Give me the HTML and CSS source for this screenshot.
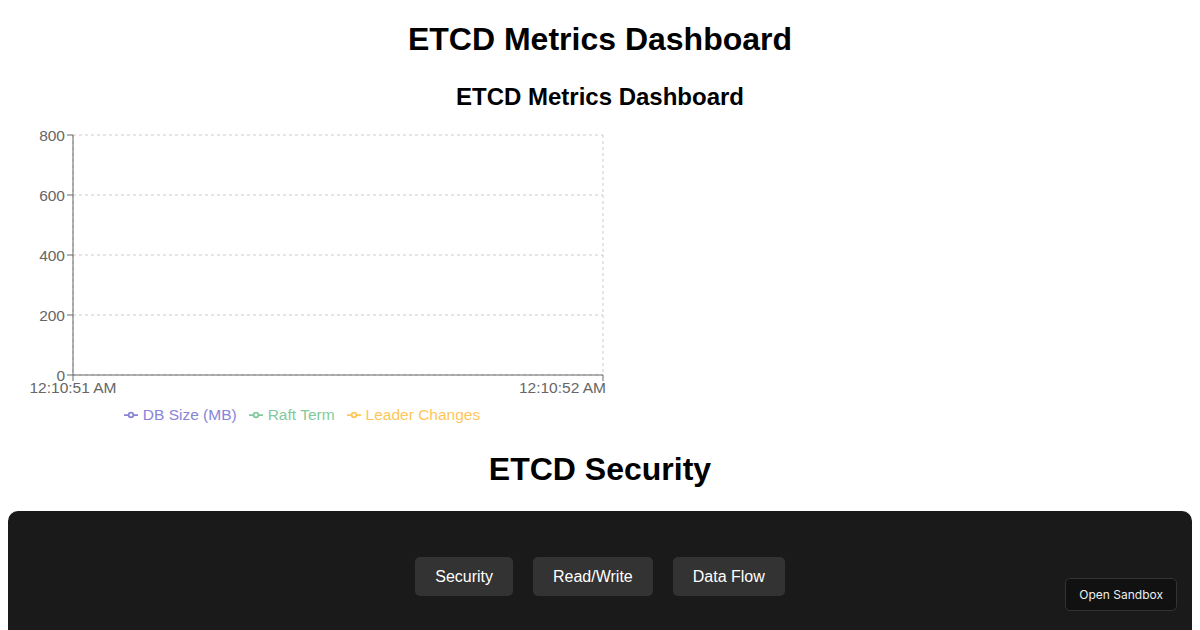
FILE: index.html
```html
<!DOCTYPE html>
<html lang="en">
<head>
	<meta charset="UTF-8">
	<title>ETCD Dashboard</title>
	<link rel="stylesheet" href="styles.css">
</head>
<body>
	<h1 class="title">ETCD Metrics Dashboard</h1>
	<div class="metrics">
		<h2 class="subtitle">ETCD Metrics Dashboard</h2>
		<div class="chart">
			<svg class="chart-svg" width="600" height="270" viewBox="0 0 600 270">
				<g class="grid">
					<line x1="65" y1="5" x2="595" y2="5"></line>
					<line x1="65" y1="65" x2="595" y2="65"></line>
					<line x1="65" y1="125" x2="595" y2="125"></line>
					<line x1="65" y1="185" x2="595" y2="185"></line>
					<line x1="65" y1="245" x2="595" y2="245"></line>
					<line x1="65" y1="5" x2="65" y2="245"></line>
					<line x1="595" y1="5" x2="595" y2="245"></line>
				</g>
				<g class="axis">
					<line x1="65" y1="5" x2="65" y2="245"></line>
					<line x1="65" y1="245" x2="595" y2="245"></line>
					<line x1="59" y1="5" x2="65" y2="5"></line>
					<line x1="59" y1="65" x2="65" y2="65"></line>
					<line x1="59" y1="125" x2="65" y2="125"></line>
					<line x1="59" y1="185" x2="65" y2="185"></line>
					<line x1="59" y1="245" x2="65" y2="245"></line>
					<line x1="65" y1="245" x2="65" y2="251"></line>
					<line x1="595" y1="245" x2="595" y2="251"></line>
				</g>
				<g class="tick-text y-ticks">
					<text x="57" y="5" dy="0.355em">800</text>
					<text x="57" y="65" dy="0.355em">600</text>
					<text x="57" y="125" dy="0.355em">400</text>
					<text x="57" y="185" dy="0.355em">200</text>
					<text x="57" y="245" dy="0.355em">0</text>
				</g>
				<g class="tick-text">
					<text x="65" y="252" dy="0.71em" text-anchor="middle">12:10:51 AM</text>
					<text x="598" y="252" dy="0.71em" text-anchor="end">12:10:52 AM</text>
				</g>
			</svg>
			<ul class="legend">
				<li class="legend-item db">
					<svg width="14" height="14" viewBox="0 0 32 32"><path d="M0,16h10.666A5.333,5.333,0,1,1,21.333,16H32M21.333,16A5.333,5.333,0,1,1,10.666,16"></path></svg>
					<span>DB Size (MB)</span>
				</li>
				<li class="legend-item raft">
					<svg width="14" height="14" viewBox="0 0 32 32"><path d="M0,16h10.666A5.333,5.333,0,1,1,21.333,16H32M21.333,16A5.333,5.333,0,1,1,10.666,16"></path></svg>
					<span>Raft Term</span>
				</li>
				<li class="legend-item leader">
					<svg width="14" height="14" viewBox="0 0 32 32"><path d="M0,16h10.666A5.333,5.333,0,1,1,21.333,16H32M21.333,16A5.333,5.333,0,1,1,10.666,16"></path></svg>
					<span>Leader Changes</span>
				</li>
			</ul>
		</div>
	</div>
	<h1 class="title security-title">ETCD Security</h1>
	<div class="panel">
		<div class="tabs">
			<button class="tab">Security</button>
			<button class="tab">Read/Write</button>
			<button class="tab">Data Flow</button>
		</div>
	</div>
	<button class="sandbox">Open Sandbox</button>
</body>
</html>
```

FILE: styles.css
```css
body{
	margin: 0 8px;
	font-family: "Liberation Sans", Arial, sans-serif;
	color: #000;
	background: #fff;
}
.title{
	text-align: center;
	font-size: 32px;
	margin: 21px 0;
}
.security-title{
	margin-bottom: 23px;
}
.subtitle{
	text-align: center;
	font-size: 24px;
	margin: 25px 0 0;
}
.chart{
	width: 600px;
	height: 300px;
	margin-top: 19px;
}
.chart-svg{
	display: block;
	overflow: visible;
}
.grid line{
	stroke: #ccc;
	stroke-dasharray: 3 3;
}
.axis line{
	stroke: #666;
}
.tick-text text{
	fill: #666;
	font-size: 15.5px;
}
.y-ticks text{
	text-anchor: end;
}
.legend{
	list-style: none;
	margin: 0;
	padding: 0;
	height: 30px;
	display: flex;
	justify-content: center;
	align-items: center;
	font-size: 15.5px;
}
.legend-item{
	display: flex;
	align-items: center;
	margin-right: 12px;
}
.legend-item svg{
	display: block;
	margin-right: 5px;
}
.legend-item path{
	fill: none;
	stroke-width: 4;
}
.db{ color: #8884d8; }
.db path{ stroke: #8884d8; }
.raft{ color: #82ca9d; }
.raft path{ stroke: #82ca9d; }
.leader{ color: #ffc658; }
.leader path{ stroke: #ffc658; }
.panel{
	background: #1a1a1a;
	border-radius: 10px 10px 0 0;
	padding: 46px 20px 40px;
	min-height: 200px;
}
.tabs{
	display: flex;
	justify-content: center;
	gap: 20px;
}
.tab{
	background: #333;
	color: #fff;
	border: none;
	border-radius: 5px;
	padding: 10px 20px;
	font-family: "Liberation Sans", Arial, sans-serif;
	font-size: 16px;
	line-height: 19px;
	cursor: pointer;
}
.sandbox{
	position: fixed;
	right: 23px;
	bottom: 19px;
	background: #111;
	color: #eee;
	border: 1px solid #333;
	border-radius: 5px;
	padding: 8px 13px;
	font-family: "Inter", "Liberation Sans", sans-serif;
	font-size: 12px;
	line-height: 15px;
}
```
